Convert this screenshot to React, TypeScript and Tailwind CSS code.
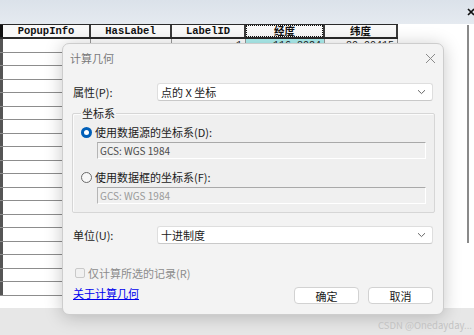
import React from "react";

const cols = [
  { name: "PopupInfo", w: "w-[88px]", cjk: false },
  { name: "HasLabel", w: "w-[81px]", cjk: false },
  { name: "LabelID", w: "w-[74px]", cjk: false },
  { name: "经度", w: "w-[79px]", cjk: true },
  { name: "纬度", w: "w-[73px]", cjk: true },
];

const firstRow = ["", "", "1", "116.3924", "39.90415"];

function Chevron() {
  return (
    <svg width="9" height="6" viewBox="0 0 9 6" className="text-[#666]">
      <path d="M1 1.2 L4.5 4.6 L8 1.2" fill="none" stroke="currentColor" strokeWidth="1" />
    </svg>
  );
}

function Select({ value }: { value: string }) {
  return (
    <div className="flex-1 h-[18px] flex items-center justify-between pl-[3px] pr-[6px] bg-white border border-[#dedede] border-b-[#c9c9c9] rounded-[3px]">
      <span className="text-[11px] leading-[14px] text-[#1a1a1a]">{value}</span>
      <Chevron />
    </div>
  );
}

function Radio({ checked, label }: { checked: boolean; label: string }) {
  return (
    <div className="h-[16px] flex items-center gap-[3px]">
      {checked ? (
        <span className="w-[11px] h-[11px] rounded-full bg-[#005fb8] flex items-center justify-center">
          <span className="w-[5px] h-[5px] rounded-full bg-white" />
        </span>
      ) : (
        <span className="w-[11px] h-[11px] rounded-full border border-[#6a6a6a] bg-[#f7f7f7]" />
      )}
      <span className="text-[11px] leading-[14px] text-[#1a1a1a]">{label}</span>
    </div>
  );
}

function Field({ value, dim }: { value: string; dim?: boolean }) {
  return (
    <div className="ml-[16px] mt-[2px] h-[17px] flex items-center pl-[2px] bg-[#f0f0f0] border border-[#ededed] border-t-[#a9a9a9] border-l-[#b5b5b5] border-r-white border-b-white">
      <span className={`text-[10px] leading-[12px] ${dim ? "text-[#9a9a9a]" : "text-[#4a4a4a]"}`}>
        {value}
      </span>
    </div>
  );
}

export default function App() {
  return (
    <div
      className="relative w-[474px] h-[335px] overflow-hidden bg-white"
      style={{ fontFamily: '"Noto Sans CJK SC", "Noto Sans", sans-serif' }}
    >
      {/* window band */}
      <div className="h-[24px] bg-gradient-to-b from-[#dbe2ea] to-[#e5eaf0] flex justify-end items-center">
        <svg width="8" height="8" viewBox="0 0 8 8" className="mr-[-1px] mt-[-1px]">
          <path d="M1 1 L7 7 M7 1 L1 7" stroke="#111" strokeWidth="1.6" />
        </svg>
      </div>

      {/* table */}
      <div className="flex">
        <div className="w-[398px]">
          <div className="flex h-[15px] border-t border-b-2 border-[#2a2a2a] bg-[#f9f9f9]">
            <div className="w-[3px] bg-[#111]" />
            {cols.map((c, i) => (
              <div
                key={c.name}
                className={`${c.w} border-r-2 border-[#3a3a3a] flex items-center justify-center text-[10.5px] leading-[12px] font-bold text-[#111]`}
                style={c.cjk ? undefined : { fontFamily: '"Liberation Mono", monospace' }}
              >
                {i === 3 ? (
                  <div className="w-full h-full border border-dotted border-[#111] flex items-center justify-center">
                    {c.name}
                  </div>
                ) : (
                  c.name
                )}
              </div>
            ))}
          </div>
          {Array.from({ length: 19 }).map((_, r) => (
            <div key={r} className="flex h-[13.5px] border-b border-[#8d8d8d]">
              <div className="w-[3px] bg-[#555]" />
              {cols.map((c, i) => (
                <div
                  key={c.name}
                  className={`${c.w} border-r border-[#9a9a9a] flex items-start justify-end pr-[3px] pt-[1px] text-[10px] leading-[12px] text-[#222] ${
                    r === 0 && i === 3 ? "bg-[#aef0f0]" : ""
                  }`}
                  style={{ fontFamily: '"Liberation Mono", monospace' }}
                >
                  {r === 0 ? firstRow[i] : ""}
                </div>
              ))}
            </div>
          ))}
        </div>
        <div className="flex-1 pl-[69px] pt-[1px]">
          <div className="w-[2px] h-[218px] bg-[#8a8a8a]" />
        </div>
      </div>
      <div className="h-[12px] bg-white" />
      <div className="h-[40px] bg-[#e7e7e7]" />

      {/* dialog */}
      <div className="absolute left-[62px] top-[43px] w-[382px] h-[272px] rounded-[7px] bg-[#f3f3f3] border border-[#cdcdcd] shadow-[0_2px_18px_rgba(0,0,0,0.22)] flex flex-col">
        <div className="h-[28px] flex items-center justify-between pl-[7px] pr-[7px]">
          <span className="text-[11px] leading-[14px] text-[#7a7a7a]">计算几何</span>
          <svg width="11" height="11" viewBox="0 0 11 11">
            <path d="M1 1 L10 10 M10 1 L1 10" stroke="#8a8a8a" strokeWidth="1" />
          </svg>
        </div>

        <div className="px-[10px] flex flex-col">
          <div className="mt-[11px] flex items-center">
            <span className="w-[84px] text-[11px] leading-[14px] text-[#1a1a1a]">属性(P):</span>
            <Select value="点的 X 坐标" />
          </div>

          <fieldset className="mt-[6px] -ml-px -mr-[2px] px-[8px] pb-[8px] border border-[#d6d6d6] rounded-[2px] bg-[#efefef] shadow-[inset_1px_1px_0_#fbfbfb]">
            <legend className="px-[1px] text-[11px] leading-[13px] text-[#1a1a1a] bg-[#f3f3f3]">
              坐标系
            </legend>
            <div className="mt-[4px]">
              <Radio checked label="使用数据源的坐标系(D):" />
            </div>
            <Field value="GCS: WGS 1984" />
            <div className="mt-[10px]">
              <Radio checked={false} label="使用数据框的坐标系(F):" />
            </div>
            <Field value="GCS: WGS 1984" dim />
          </fieldset>

          <div className="mt-[13px] flex items-center">
            <span className="w-[84px] text-[11px] leading-[14px] text-[#1a1a1a]">单位(U):</span>
            <Select value="十进制度" />
          </div>

          <div className="mt-[21px] h-[16px] flex items-center gap-[3px] pl-[2px]">
            <span className="w-[10px] h-[10px] rounded-[2px] border border-[#c9c9c9] bg-[#f1f1f1]" />
            <span className="text-[11px] leading-[14px] text-[#8c8c8c]">仅计算所选的记录(R)</span>
          </div>

          <div className="mt-[6px] flex justify-between items-start">
            <a className="text-[11px] leading-[12px] text-[#0000ee] underline">关于计算几何</a>
            <div className="flex gap-[9px]">
              <button className="w-[65px] h-[17px] rounded-[4px] bg-white border border-[#d2d2d2] text-[11px] leading-[14px] text-[#1a1a1a]">
                确定
              </button>
              <button className="w-[65px] h-[17px] rounded-[4px] bg-white border border-[#d2d2d2] text-[11px] leading-[14px] text-[#1a1a1a]">
                取消
              </button>
            </div>
          </div>
        </div>
      </div>

      <div className="absolute right-[2px] bottom-[4px] text-[9.5px] leading-[12px] text-[#c3c3c3]">
        CSDN @Onedayday...
      </div>
    </div>
  );
}
